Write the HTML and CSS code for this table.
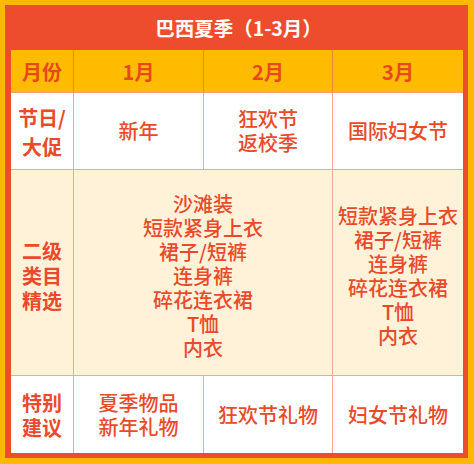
FILE: index.html
```html
<!DOCTYPE html>
<html lang="zh-CN">
<head>
<meta charset="utf-8">
<link rel="stylesheet" href="styles.css">
</head>
<body>
<div class="page">
  <div class="frame">
    <div class="title">巴西夏季（1-3月）</div>
    <div class="grid">
      <div class="cell head first">月份</div>
      <div class="cell head">1月</div>
      <div class="cell head">2月</div>
      <div class="cell head last">3月</div>

      <div class="cell label tall white">节日/<br>大促</div>
      <div class="cell white">新年</div>
      <div class="cell white">狂欢节<br>返校季</div>
      <div class="cell white last">国际妇女节</div>

      <div class="cell label cream">二级<br>类目<br>精选</div>
      <div class="cell cream span2">沙滩装<br>短款紧身上衣<br>裙子/短裤<br>连身裤<br>碎花连衣裙<br>T恤<br>内衣</div>
      <div class="cell cream last">短款紧身上衣<br>裙子/短裤<br>连身裤<br>碎花连衣裙<br>T恤<br>内衣</div>

      <div class="cell label white bottom">特别<br>建议</div>
      <div class="cell white bottom">夏季物品<br>新年礼物</div>
      <div class="cell white bottom">狂欢节礼物</div>
      <div class="cell white bottom last">妇女节礼物</div>
    </div>
  </div>
</div>
</body>
</html>
```

FILE: styles.css
```css
html, body {
  margin: 0;
  padding: 0;
}
body {
  background: #ffb800;
  width: 474px;
  height: 464px;
  overflow: hidden;
  font-family: "Noto Sans CJK SC", "Noto Sans", sans-serif;
}
.page {
  padding: 5px 6px 6px 5px;
}
.frame {
  background: #ee4d2d;
  padding: 0 5px 5px 6px;
  width: 452px;
}
.title {
  height: 45px;
  display: flex;
  align-items: center;
  justify-content: center;
  color: #ffffff;
  font-weight: 700;
  font-size: 19.5px;
  padding-left: 3px;
}
.grid {
  display: grid;
  grid-template-columns: 63px 130px 129px 130px;
  grid-template-rows: 43px 77px 206px 77px;
}
.cell {
  box-sizing: border-box;
  display: flex;
  align-items: center;
  justify-content: center;
  text-align: center;
  color: #ea4a2a;
  font-size: 20px;
  font-weight: 500;
  line-height: 24px;
  border-right: 1px solid #f3a893;
  border-bottom: 1px solid #f3a893;
}
.cell.last {
  border-right: none;
}
.cell.bottom {
  border-bottom: none;
}
.head {
  background: #ffbb00;
  font-weight: 700;
  color: #e8481f;
  border-right-color: #f0882a;
  border-bottom-color: #f5a070;
  padding-top: 1px;
}
.label {
  font-weight: 700;
  line-height: 25px;
}
.label.tall {
  line-height: 29px;
  padding-top: 2px;
}
.white {
  background: #ffffff;
}
.cream {
  background: #fff2d9;
  padding-top: 6px;
}
.span2 {
  grid-column: span 2;
}
```
